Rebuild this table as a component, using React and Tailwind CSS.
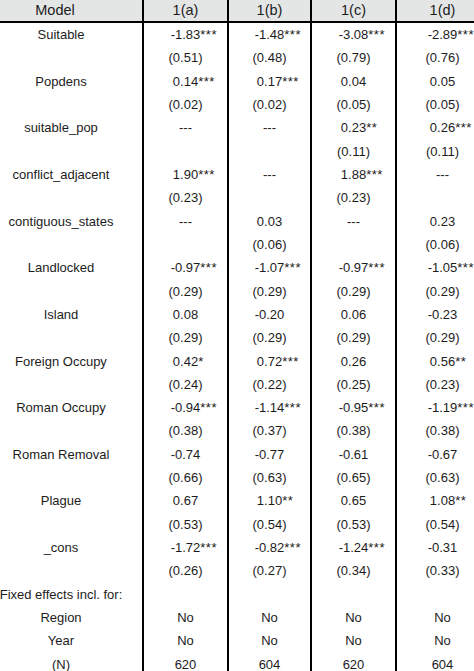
import React from "react"

const rows = [
  ["Suitable", "-1.83***", "-1.48***", "-3.08***", "-2.89***"],
  ["", "(0.51)", "(0.48)", "(0.79)", "(0.76)"],
  ["Popdens", "0.14***", "0.17***", "0.04", "0.05"],
  ["", "(0.02)", "(0.02)", "(0.05)", "(0.05)"],
  ["suitable_pop", "---", "---", "0.23**", "0.26***"],
  ["", "", "", "(0.11)", "(0.11)"],
  ["conflict_adjacent", "1.90***", "---", "1.88***", "---"],
  ["", "(0.23)", "", "(0.23)", ""],
  ["contiguous_states", "---", "0.03", "---", "0.23"],
  ["", "", "(0.06)", "", "(0.06)"],
  ["Landlocked", "-0.97***", "-1.07***", "-0.97***", "-1.05***"],
  ["", "(0.29)", "(0.29)", "(0.29)", "(0.29)"],
  ["Island", "0.08", "-0.20", "0.06", "-0.23"],
  ["", "(0.29)", "(0.29)", "(0.29)", "(0.29)"],
  ["Foreign Occupy", "0.42*", "0.72***", "0.26", "0.56**"],
  ["", "(0.24)", "(0.22)", "(0.25)", "(0.23)"],
  ["Roman Occupy", "-0.94***", "-1.14***", "-0.95***", "-1.19***"],
  ["", "(0.38)", "(0.37)", "(0.38)", "(0.38)"],
  ["Roman Removal", "-0.74", "-0.77", "-0.61", "-0.67"],
  ["", "(0.66)", "(0.63)", "(0.65)", "(0.63)"],
  ["Plague", "0.67", "1.10**", "0.65", "1.08**"],
  ["", "(0.53)", "(0.54)", "(0.53)", "(0.54)"],
  ["_cons", "-1.72***", "-0.82***", "-1.24***", "-0.31"],
  ["", "(0.26)", "(0.27)", "(0.34)", "(0.33)"],
  ["Fixed effects incl. for:", "", "", "", ""],
  ["Region", "No", "No", "No", "No"],
  ["Year", "No", "No", "No", "No"],
  ["(N)", "620", "604", "620", "604"],
]

// number is centred, significance stars hang off to the right
const Value = ({ text }) => {
  const m = text.match(/^(.*?)(\*+)$/)
  if (!m) return <span>{text}</span>
  return (
    <span>
      {m[1]}
      <span className="inline-block w-0 whitespace-nowrap text-left tracking-[0.5px]">{m[2]}</span>
    </span>
  )
}

const App = () => {
  return (
    <div className="w-[474px] h-[671px] overflow-hidden bg-white text-[#1c1c1c]" style={{ fontFamily: '"Liberation Sans", Arial, sans-serif' }}>
      <div className="w-[488px] grid grid-cols-[142px_85px_83px_85px_93px]">
        {/* Header */}
        <div className="h-[23px] bg-[#e4e6e6] border-b-2 border-black flex items-center justify-center pr-[32px] text-[14.5px]">Model</div>
        {["1(a)", "1(b)", "1(c)", "1(d)"].map((h) => (
          <div key={h} className="h-[23px] bg-[#e4e6e6] border-b-2 border-l-2 border-black flex items-center justify-center text-[14.5px]">
            {h}
          </div>
        ))}

        {/* Body */}
        {rows.map((r, i) => (
          <React.Fragment key={i}>
            <div className="h-[23.33px] flex items-center justify-center pr-[20px] text-[13px] whitespace-nowrap">{r[0]}</div>
            {r.slice(1).map((v, j) => (
              <div key={j} className="h-[23.33px] border-l-2 border-black flex items-center justify-center text-[13px] whitespace-nowrap">
                {v && <Value text={v} />}
              </div>
            ))}
          </React.Fragment>
        ))}
      </div>
    </div>
  )
}

export default App
